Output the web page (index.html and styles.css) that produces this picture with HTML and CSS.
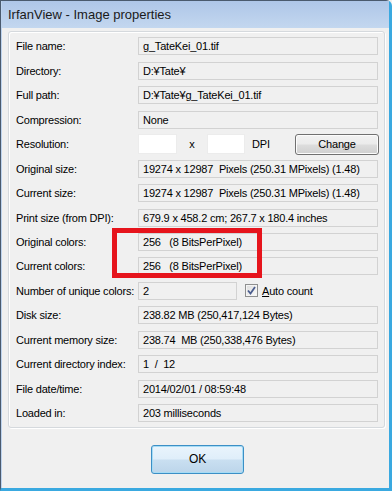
FILE: index.html
```html
<!DOCTYPE html>
<html lang="en">

<head>
    <meta charset="UTF-8">
    <title>IrfanView - Image properties</title>
    <link rel="stylesheet" href="styles.css">
</head>

<body>
    <div class="window">
        <div class="titlebar">IrfanView - Image properties</div>
        <div class="client">
            <div class="group">
                <div class="props">
                    <span class="label">File name:</span>
                    <span class="value">g_TateKei_01.tif</span>

                    <span class="label">Directory:</span>
                    <span class="value">D:¥Tate¥</span>

                    <span class="label">Full path:</span>
                    <span class="value">D:¥Tate¥g_TateKei_01.tif</span>

                    <span class="label">Compression:</span>
                    <span class="value">None</span>

                    <span class="label">Resolution:</span>
                    <div class="res-row">
                        <span class="input first"></span>
                        <span class="times">x</span>
                        <span class="input second"></span>
                        <span class="dpi">DPI</span>
                        <button class="btn change" type="button">Chan<u>g</u>e</button>
                    </div>

                    <span class="label">Original size:</span>
                    <span class="value">19274 x 12987&nbsp; Pixels (250.31 MPixels) (1.48)</span>

                    <span class="label">Current size:</span>
                    <span class="value">19274 x 12987&nbsp; Pixels (250.31 MPixels) (1.48)</span>

                    <span class="label">Print size (from DPI):</span>
                    <span class="value">679.9 x 458.2 cm; 267.7 x 180.4 inches</span>

                    <span class="label">Original colors:</span>
                    <span class="value">256&nbsp;&nbsp; (8 BitsPerPixel)</span>

                    <span class="label">Current colors:</span>
                    <span class="value">256&nbsp;&nbsp; (8 BitsPerPixel)</span>

                    <span class="label">Number of unique colors:</span>
                    <div class="unique-row">
                        <span class="value short">2</span>
                        <label class="check">
                            <span class="check-box">
                                <svg width="9" height="9" viewBox="0 0 9 9">
                                    <path d="M1 4.5 L3.5 7.5 L8 1" fill="none" stroke="#4b5d8e" stroke-width="1.8" />
                                </svg>
                            </span>
                            <span><u>A</u>uto count</span>
                        </label>
                    </div>

                    <span class="label">Disk size:</span>
                    <span class="value">238.82 MB (250,417,124 Bytes)</span>

                    <span class="label">Current memory size:</span>
                    <span class="value">238.74&nbsp; MB (250,338,476 Bytes)</span>

                    <span class="label">Current directory index:</span>
                    <span class="value">1&nbsp; /&nbsp; 12</span>

                    <span class="label">File date/time:</span>
                    <span class="value">2014/02/01 / 08:59:48</span>

                    <span class="label">Loaded in:</span>
                    <span class="value">203 milliseconds</span>
                </div>
            </div>
            <div class="actions">
                <button class="btn ok" type="button">OK</button>
            </div>
        </div>
        <div class="highlight" aria-hidden="true"></div>
    </div>
</body>

</html>
```

FILE: styles.css
```css
body,
body * {
    padding: 0;
    margin: 0;
    box-sizing: border-box;
}

body {
    font-family: 'Liberation Sans', Arial, sans-serif;
    font-size: 11px;
    color: #000;
    background: #f0f0f0;
}

.window {
    position: relative;
    width: 392px;
    height: 491px;
    display: flex;
    flex-direction: column;
    background: #bdd3ee;
    border-left: 1px solid #4a5a6e;
    border-top: 1px solid #4a5a6e;
    border-right: 3px solid #3aa9e0;
    border-bottom: 3px solid #3aa9e0;
    border-top-right-radius: 6px;
    padding-left: 1px;
}

.titlebar {
    height: 27px;
    display: flex;
    align-items: center;
    padding-left: 6px;
    font-size: 13px;
    color: #1a1a1a;
    background: linear-gradient(#aec6e8, #c3d7ef);
}

.client {
    flex: 1;
    display: flex;
    flex-direction: column;
    background: #f0f0f0;
    padding: 3px 4px 0 6px;
}

.group {
    border: 1px solid #d5d9dd;
    box-shadow: inset 1px 1px 0 #fff, 1px 1px 0 #fff;
    border-radius: 3px;
    padding: 2px 6px 1px 7px;
}

.props {
    display: grid;
    grid-template-columns: 122px 1fr;
    grid-auto-rows: 24.47px;
    align-items: center;
    letter-spacing: -0.2px;
}

.label {
    white-space: nowrap;
}

.value {
    height: 18px;
    display: flex;
    align-items: center;
    padding-left: 4px;
    border: 1px solid #d2d2d2;
    white-space: nowrap;
}

.res-row,
.unique-row {
    display: flex;
    align-items: center;
}

.input {
    height: 20px;
    background: #fff;
    border: 1px solid #ececec;
}

.input.first {
    width: 39px;
}

.input.second {
    width: 38px;
}

.times {
    width: 30px;
    text-align: center;
}

.dpi {
    margin-left: 7px;
}

.btn {
    font-family: inherit;
    font-size: 11px;
    color: #000;
    border-radius: 3px;
    letter-spacing: -0.2px;
}

.change {
    margin-left: auto;
    margin-right: -1px;
    width: 84px;
    height: 21px;
    border: 1px solid #707070;
    background: linear-gradient(#f2f2f2 0%, #ebebeb 48%, #dddddd 52%, #cfcfcf 100%);
    box-shadow: inset 0 0 0 1px #fcfcfc;
}

.value.short {
    width: 99px;
}

.check {
    display: flex;
    align-items: center;
    margin-left: 8px;
    gap: 4px;
}

.check-box {
    width: 13px;
    height: 13px;
    display: flex;
    align-items: center;
    justify-content: center;
    border: 1px solid #8e8f8f;
    background: linear-gradient(135deg, #dcdcdc, #fbfbfb);
    box-shadow: inset 0 0 0 1px #f4f4f4;
}

.actions {
    display: flex;
    justify-content: center;
    padding-top: 17px;
    padding-left: 2px;
}

.ok {
    width: 93px;
    height: 29px;
    font-size: 12px;
    border: 1px solid #3c8fc6;
    background: linear-gradient(#e9f4fc 0%, #dfeefa 48%, #c9dff1 52%, #bcd5ea 100%);
    box-shadow: inset 0 0 0 1px #a6dcf5;
}

/* annotation drawn over the dialog */
.highlight {
    position: absolute;
    left: 111px;
    top: 227px;
    width: 150px;
    height: 50px;
    border: 5px solid #e6141c;
}
```
